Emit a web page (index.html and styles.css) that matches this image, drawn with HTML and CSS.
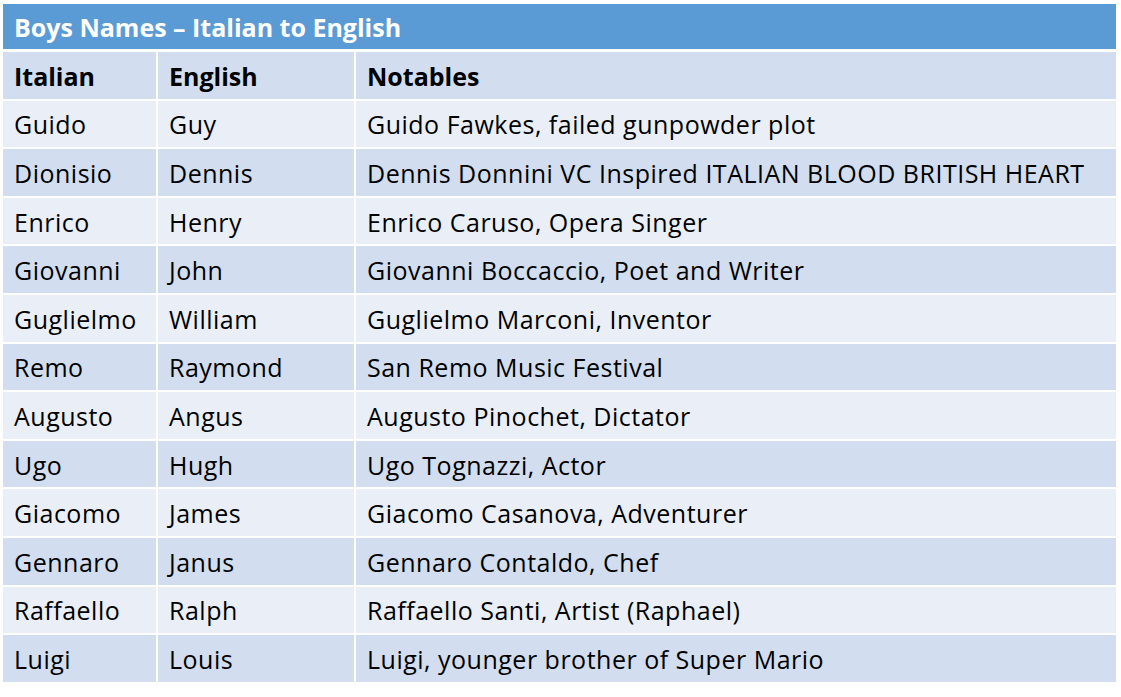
FILE: index.html
```html
<!DOCTYPE html>
<html lang="en">
<head>
<meta charset="utf-8">
<title>Boys Names – Italian to English</title>
<link rel="stylesheet" href="styles.css">
</head>
<body>
<div class="names">
  <div class="title">Boys Names – Italian to English</div>
  <div class="grid">
    <div class="cell head">Italian</div><div class="cell head">English</div><div class="cell head">Notables</div>
    <div class="cell odd">Guido</div><div class="cell odd">Guy</div><div class="cell odd">Guido Fawkes, failed gunpowder plot</div>
    <div class="cell even">Dionisio</div><div class="cell even">Dennis</div><div class="cell even">Dennis Donnini VC Inspired ITALIAN BLOOD BRITISH HEART</div>
    <div class="cell odd">Enrico</div><div class="cell odd">Henry</div><div class="cell odd">Enrico Caruso, Opera Singer</div>
    <div class="cell even">Giovanni</div><div class="cell even">John</div><div class="cell even">Giovanni Boccaccio, Poet and Writer</div>
    <div class="cell odd">Guglielmo</div><div class="cell odd">William</div><div class="cell odd">Guglielmo Marconi, Inventor</div>
    <div class="cell even">Remo</div><div class="cell even">Raymond</div><div class="cell even">San Remo Music Festival</div>
    <div class="cell odd">Augusto</div><div class="cell odd">Angus</div><div class="cell odd">Augusto Pinochet, Dictator</div>
    <div class="cell even">Ugo</div><div class="cell even">Hugh</div><div class="cell even">Ugo Tognazzi, Actor</div>
    <div class="cell odd">Giacomo</div><div class="cell odd">James</div><div class="cell odd">Giacomo Casanova, Adventurer</div>
    <div class="cell even">Gennaro</div><div class="cell even">Janus</div><div class="cell even">Gennaro Contaldo, Chef</div>
    <div class="cell odd">Raffaello</div><div class="cell odd">Ralph</div><div class="cell odd">Raffaello Santi, Artist (Raphael)</div>
    <div class="cell even">Luigi</div><div class="cell even">Louis</div><div class="cell even">Luigi, younger brother of Super Mario</div>
  </div>
</div>
</body>
</html>
```

FILE: styles.css
```css
html, body {
  margin: 0;
  background: #ffffff;
}
body {
  padding: 4px 5px 0 3px;
  font-family: "Open Sans", Lato, sans-serif;
  color: #000000;
}
.names {
  width: 1113px;
}
.title {
  height: 45px;
  background: #5b9bd5;
  color: #ffffff;
  font-weight: bold;
  font-size: 25px;
  line-height: 46px;
  padding-left: 11px;
  margin-bottom: 3px;
}
.grid {
  display: grid;
  grid-template-columns: 153px 196px 1fr;
  grid-auto-rows: 46.6px;
  gap: 2px;
}
.cell {
  font-size: 25px;
  letter-spacing: 0.5px;
  padding-left: 11px;
  padding-top: 1px;
  display: flex;
  align-items: center;
  white-space: nowrap;
}
.head {
  font-weight: bold;
  letter-spacing: 0;
  background: #d2deef;
}
.odd {
  background: #eaeff7;
}
.even {
  background: #d2deef;
}
```
